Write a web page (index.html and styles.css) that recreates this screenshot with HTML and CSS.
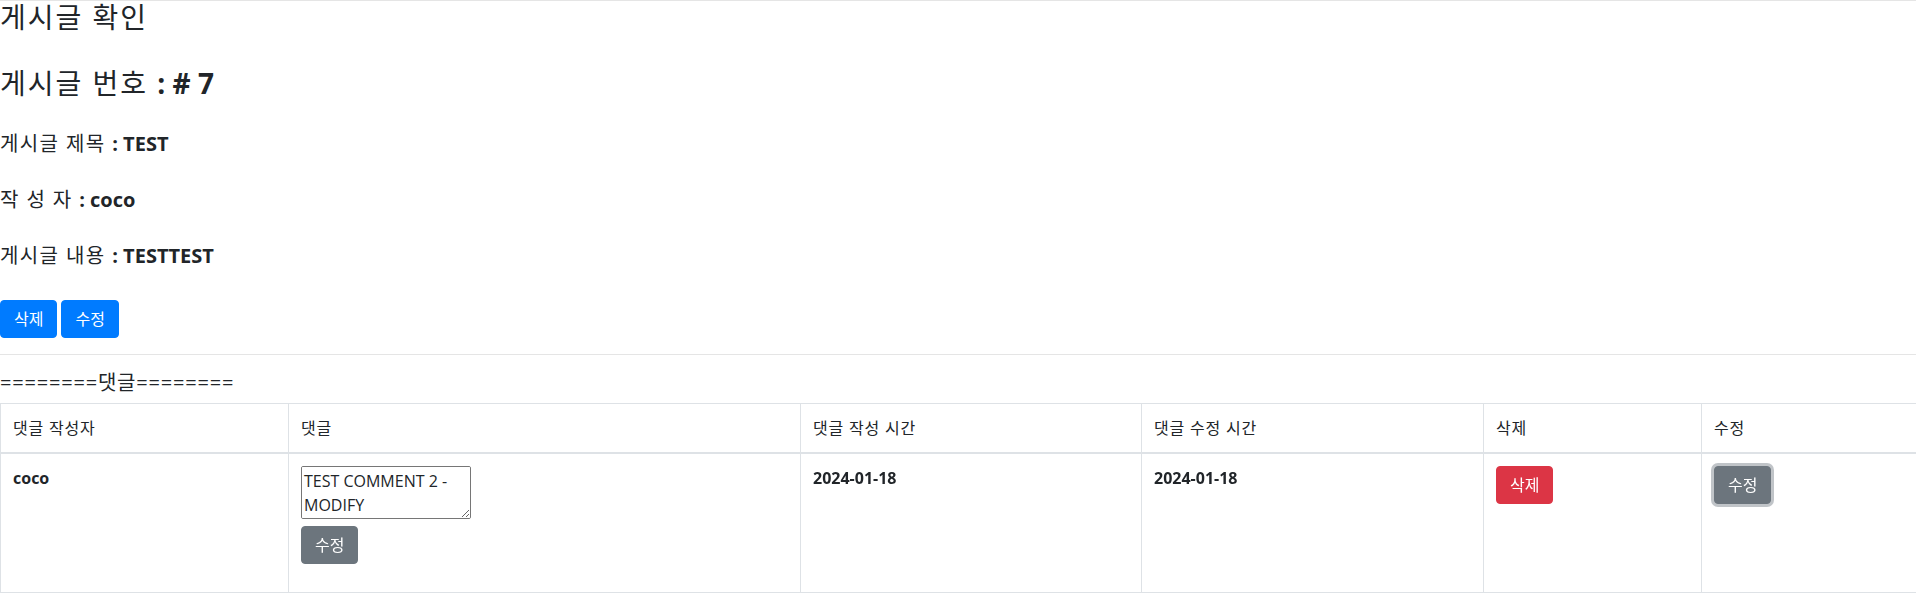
FILE: index.html
```html
<!DOCTYPE html>
<html lang="ko">
<head>
    <meta charset="UTF-8">
    <meta name="viewport" content="width=device-width, initial-scale=1.0">
    <title>게시글 확인</title>
    <link rel="stylesheet" href="styles.css">
</head>
<body>
    <div class="container">
        <h3 class="page-title">게시글 확인</h3>
        <h3 class="post-no">게시글 번호 <b>: # 7</b></h3>
        <h5 class="post-field">게시글 제목 <b>: TEST</b></h5>
        <h5 class="post-field">작 성 자 <b>: coco</b></h5>
        <h5 class="post-field">게시글 내용 <b>: TESTTEST</b></h5>

        <form class="post-actions">
            <button type="button" class="btn btn-primary">삭제</button>
            <button type="button" class="btn btn-primary">수정</button>
        </form>

        <hr class="divider">

        <h5 class="comment-title">========댓글========</h5>
        <table class="comment-table">
            <thead>
                <tr>
                    <th class="col-writer">댓글 작성자</th>
                    <th class="col-content">댓글</th>
                    <th class="col-created">댓글 작성 시간</th>
                    <th class="col-updated">댓글 수정 시간</th>
                    <th class="col-delete">삭제</th>
                    <th class="col-edit">수정</th>
                </tr>
            </thead>
            <tbody>
                <tr>
                    <td class="strong">coco</td>
                    <td>
                        <div class="comment-edit">
                            <textarea class="comment-input" rows="2">TEST COMMENT 2 - MODIFY</textarea>
                            <button type="button" class="btn btn-secondary">수정</button>
                        </div>
                    </td>
                    <td class="strong">2024-01-18</td>
                    <td class="strong">2024-01-18</td>
                    <td><button type="button" class="btn btn-danger">삭제</button></td>
                    <td><button type="button" class="btn btn-secondary focus">수정</button></td>
                </tr>
            </tbody>
        </table>
    </div>
</body>
</html>
```

FILE: styles.css
```css
body {
    margin: 0;
    font-family: "Open Sans", "Noto Sans CJK KR", sans-serif;
    font-size: 16px;
    line-height: 1.5;
    color: #212529;
    background-color: #fff;
    border-top: 1px solid rgba(0, 0, 0, 0.1);
}
.container {
    width: 100%;
}
h3, h5 {
    font-weight: 400;
    margin: 0;
}
h3 {
    font-size: 28px;
    line-height: 1.2;
    letter-spacing: 2px;
}
h5 {
    font-size: 20px;
    line-height: 1.2;
    letter-spacing: 1.4px;
}
b {
    font-weight: 700;
    letter-spacing: 0;
}
.page-title {
    margin-bottom: 32px;
}
.post-no {
    margin-bottom: 32px;
}
.post-field {
    margin-bottom: 32px;
}
.post-actions {
    display: flex;
    gap: 4px;
    margin-bottom: 16px;
}
.btn {
    display: inline-block;
    font-family: inherit;
    font-size: 16px;
    line-height: 1.5;
    padding: 6px 13px;
    border: 1px solid transparent;
    border-radius: 4px;
    color: #fff;
    cursor: pointer;
}
.btn-primary {
    background-color: #007bff;
    border-color: #007bff;
}
.btn-danger {
    background-color: #dc3545;
    border-color: #dc3545;
}
.btn-secondary {
    background-color: #6c757d;
    border-color: #6c757d;
}
.btn-secondary.focus {
    box-shadow: 0 0 0 3px rgba(130, 138, 145, 0.5);
}
.divider {
    margin: 0 0 16px;
    border: 0;
    border-top: 1px solid rgba(0, 0, 0, 0.1);
}
.comment-title {
    margin-bottom: 8px;
    letter-spacing: 0.8px;
}
.comment-table {
    width: 100%;
    table-layout: fixed;
    border-collapse: collapse;
    border: 1px solid #dee2e6;
    border-right: 0;
}
.comment-table th,
.comment-table td {
    box-sizing: border-box;
    padding: 12px;
    border: 1px solid #dee2e6;
    text-align: left;
    vertical-align: top;
}
.comment-table th:last-child,
.comment-table td:last-child {
    border-right: 0;
}
.comment-table th {
    font-weight: 400;
    letter-spacing: 0.8px;
    border-bottom-width: 2px;
}
.comment-table .strong {
    font-weight: 700;
}
.col-writer { width: 288px; }
.col-content { width: 512px; }
.col-created { width: 341px; }
.col-updated { width: 342px; }
.col-delete { width: 218px; }
.col-edit { width: 215px; }
.comment-edit {
    display: flex;
    flex-direction: column;
    align-items: flex-start;
    gap: 7px;
    padding-bottom: 16px;
}
.comment-input {
    box-sizing: border-box;
    width: 170px;
    height: 53px;
    margin: 0;
    padding: 2px;
    font-family: inherit;
    font-size: 16px;
    line-height: 24px;
    color: #212529;
    border: 1px solid #767676;
    border-radius: 2px;
}
```
